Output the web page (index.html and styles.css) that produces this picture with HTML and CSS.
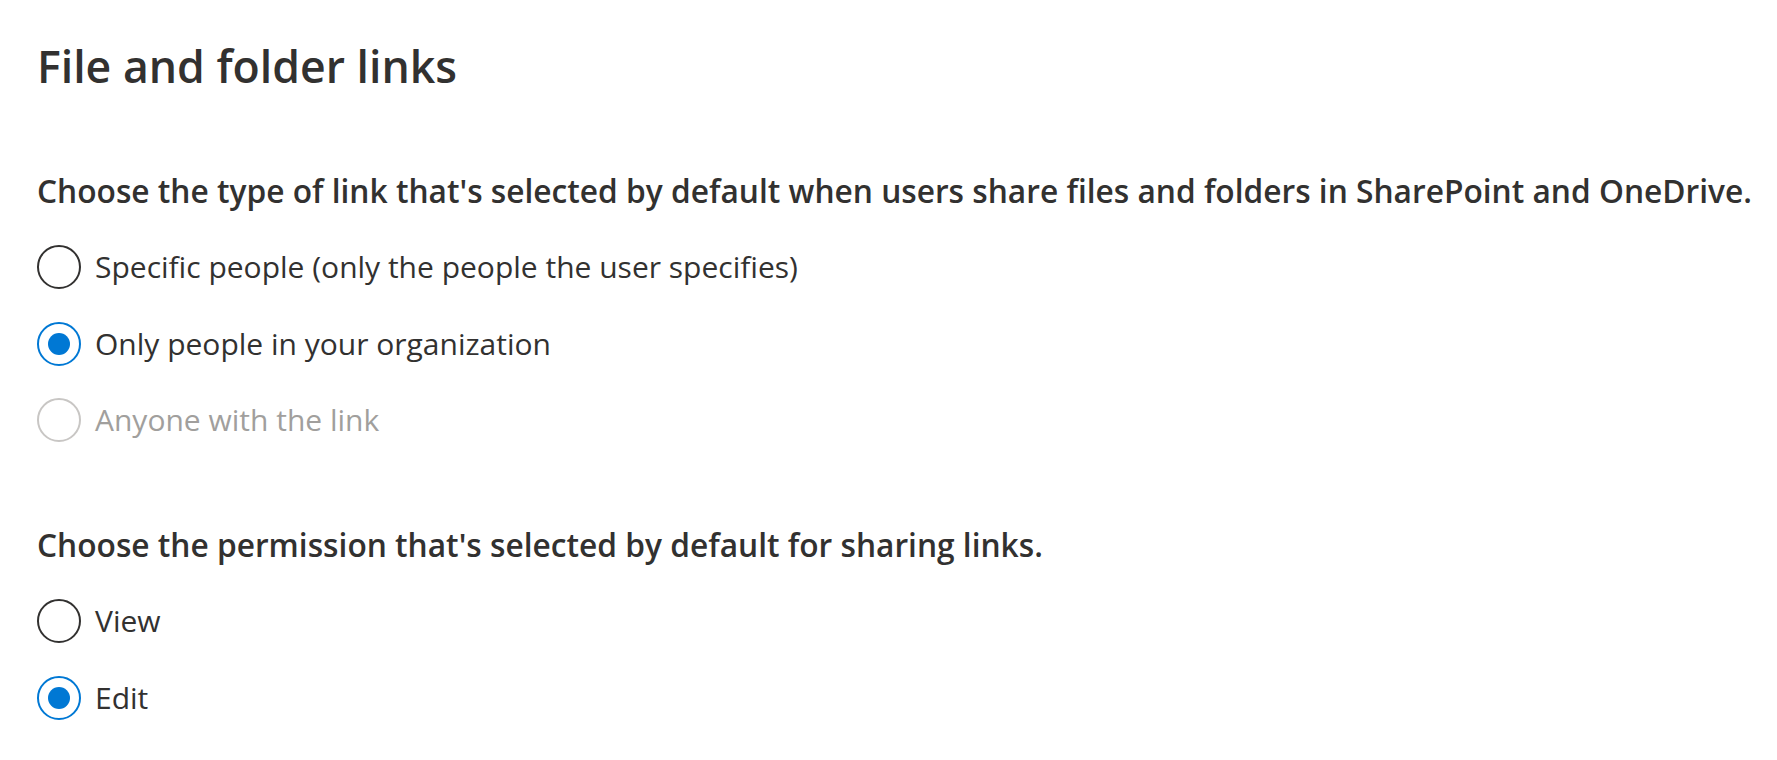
FILE: index.html
```html
<!DOCTYPE html>
<html lang="en">
<head>
<meta charset="utf-8">
<title>File and folder links</title>
<link rel="stylesheet" href="styles.css">
</head>
<body>
<main class="page">
  <h1 class="title">File and folder links</h1>

  <fieldset class="group group-type">
    <legend class="group-label">Choose the type of link that's selected by default when users share files and folders in SharePoint and OneDrive.</legend>
    <div class="options">
      <label class="option">
        <input class="radio" type="radio" name="linktype">
        <span class="option-text">Specific people (only the people the user specifies)</span>
      </label>
      <label class="option">
        <input class="radio" type="radio" name="linktype" checked>
        <span class="option-text">Only people in your organization</span>
      </label>
      <label class="option is-disabled">
        <input class="radio" type="radio" name="linktype" disabled>
        <span class="option-text">Anyone with the link</span>
      </label>
    </div>
  </fieldset>

  <fieldset class="group group-perm">
    <legend class="group-label">Choose the permission that's selected by default for sharing links.</legend>
    <div class="options">
      <label class="option">
        <input class="radio" type="radio" name="perm">
        <span class="option-text">View</span>
      </label>
      <label class="option">
        <input class="radio" type="radio" name="perm" checked>
        <span class="option-text">Edit</span>
      </label>
    </div>
  </fieldset>
</main>
</body>
</html>
```
FILE: styles.css
```css
html, body {
  margin: 0;
  padding: 0;
  background: #ffffff;
}

body {
  font-family: "Open Sans", "Noto Sans", sans-serif;
  color: #323130;
}

.page {
  padding: 36px 0 0 37px;
  display: flex;
  flex-direction: column;
}

.title {
  margin: 0;
  font-size: 44.6px;
  font-weight: 600;
  line-height: 60px;
  color: #323130;
}

.group {
  margin: 0;
  padding: 0;
  border: 0;
  min-width: 0;
}

.group-type {
  margin-top: 75px;
}

.group-perm {
  margin-top: 83px;
}

.group-label {
  padding: 0;
  display: block;
  font-size: 31.7px;
  font-weight: 600;
  line-height: 40px;
  color: #323130;
  white-space: nowrap;
}

.options {
  margin-top: 34px;
  display: flex;
  flex-direction: column;
  gap: 32.5px;
}

.option {
  display: flex;
  align-items: center;
  gap: 14px;
  height: 44px;
  font-size: 30px;
  line-height: 44px;
  color: #323130;
  cursor: pointer;
}

.radio {
  appearance: none;
  -webkit-appearance: none;
  margin: 0;
  flex: 0 0 44px;
  width: 44px;
  height: 44px;
  border: 2px solid #323130;
  border-radius: 50%;
  background: #ffffff;
  display: grid;
  place-items: center;
  cursor: pointer;
}

.radio:checked {
  border-color: #0078d4;
}

.radio:checked::before {
  content: "";
  width: 22px;
  height: 22px;
  border-radius: 50%;
  background: #0078d4;
}

.option.is-disabled {
  color: #a19f9d;
  cursor: default;
}

.radio:disabled {
  border-color: #c8c6c4;
  cursor: default;
}
```
